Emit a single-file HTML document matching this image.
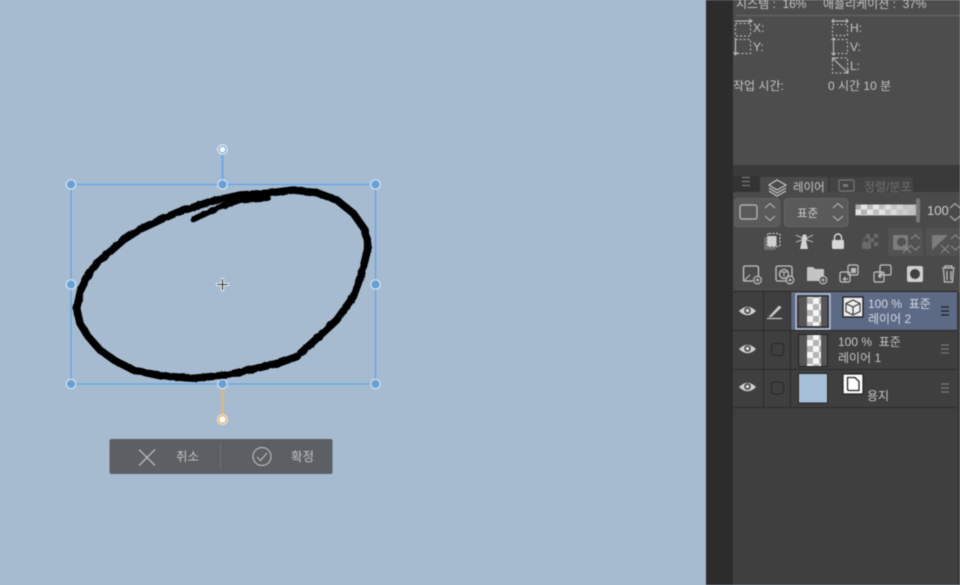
<!DOCTYPE html>
<html><head><meta charset="utf-8"><style>
html,body{margin:0;padding:0;background:#a6bbd0;width:960px;height:585px;overflow:hidden}
svg{display:block;filter:blur(.45px)}
text{font-family:"Liberation Sans","Noto Sans CJK KR",sans-serif;fill:#c4c4c4;font-size:12px;white-space:pre}
</style></head><body>
<svg width="960" height="585" viewBox="0 0 960 585" xmlns="http://www.w3.org/2000/svg">
<defs>
<pattern id="ck" width="12" height="12" patternUnits="userSpaceOnUse" x="807" y="298"><rect width="12" height="12" fill="#f6f6f6"/><rect width="6" height="6" fill="#b4b4b4"/><rect x="6" y="6" width="6" height="6" fill="#b4b4b4"/></pattern>
<pattern id="ck2" width="12" height="11" patternUnits="userSpaceOnUse" x="855" y="204"><rect width="12" height="11" fill="#e4e4e4"/><rect width="6" height="5.500" fill="#a8a8a8"/><rect x="6" y="5.500" width="6" height="5.500" fill="#a8a8a8"/></pattern>
<linearGradient id="fd"><stop offset="0" stop-color="#fff" stop-opacity="0"/><stop offset="1" stop-color="#bbb"/></linearGradient>
<filter id="rough" x="-5%" y="-5%" width="110%" height="110%"><feTurbulence type="fractalNoise" baseFrequency=".16" numOctaves="2" seed="4"/><feDisplacementMap in="SourceGraphic" scale="1.800"/></filter>
<symbol id="eye" viewBox="0 0 20 12" overflow="visible"><path d="M1 6Q10-3 19 6Q10 15 1 6Z" fill="#d0d0d0"/><circle cx="10" cy="5.500" r="3.500" fill="#444"/><circle cx="10" cy="5.500" r="1.800" fill="#ddd"/></symbol>
</defs>

<rect width="960" height="585" fill="#a6bbd0"/>

<!-- stroke -->
<g fill="none" stroke="#050505" stroke-linecap="round" stroke-linejoin="round" filter="url(#rough)">
<path stroke-width="7.500" d="M176.700,212.700L160,220L140,229.300L123.300,240L110,251.700L96.700,263.300L88.300,275L80.700,290L76.700,308.300L80,323.300L88.300,336.700L100,350L115,360.700L133.300,370L160,375.700L193.300,378.300L226.700,375L256.700,368.300L280,362.700L296.700,356.700L313.300,341.700L336.700,320L353.300,296.700L361.700,273.300L368.300,246.700L365,230L353.300,213.300L336.700,200L316.700,192.700L293.300,190L266.700,193.300L240,195L210,201.700Z"/>
<path stroke-width="6" d="M193.300,219.300L216.700,208.300L240,200L268,198"/>
</g>

<!-- transform box -->
<g fill="none">
<rect x="71" y="184.500" width="304.500" height="199.500" stroke="#5ba3ee" stroke-width="1.200"/>
<path d="M222.500 149.500V184.500" stroke="#5ba3ee" stroke-width="1.500"/>
<path d="M222.500 384V419.500" stroke="#e8b66e" stroke-width="2"/>
</g>
<g fill="#66a0d6" stroke="#d8e4ef" stroke-width="1.200">
<circle cx="71" cy="184.500" r="4.700"/><circle cx="222.500" cy="184.500" r="4.700"/><circle cx="375.500" cy="184.500" r="4.700"/>
<circle cx="71" cy="284.500" r="4.700"/><circle cx="375.500" cy="284.500" r="4.700"/>
<circle cx="71" cy="384" r="4.700"/><circle cx="222.500" cy="384" r="4.700"/><circle cx="375.500" cy="384" r="4.700"/>
</g>
<circle cx="222.500" cy="149.500" r="4.700" fill="#8fb5dc" stroke="#dfe8f0" stroke-width="1.200"/>
<circle cx="222.500" cy="149.500" r="2.600" fill="#fff"/>
<circle cx="222.500" cy="419.500" r="5" fill="none" stroke="#eee3d0" stroke-width="1"/>
<circle cx="222.500" cy="419.500" r="3.800" fill="#fff" stroke="#e8b66e" stroke-width="1.300"/>
<path d="M222.500 278v13M216 284.500h13" stroke="#f0f0f0" stroke-width="3"/>
<path d="M222.500 279v11M217 284.500h11" stroke="#333" stroke-width="1.100"/>

<!-- confirm bar -->
<rect x="109.500" y="439" width="223" height="35" rx="2" fill="#5c5f63"/>
<path d="M220.500 443V470" stroke="#6d7074" stroke-width="1"/>
<path d="M139 449.500L155 465.500M155 449.500L139 465.500" stroke="#b8b8b8" stroke-width="1.300" fill="none"/>
<circle cx="262" cy="456.500" r="9" fill="none" stroke="#b8b8b8" stroke-width="1.200"/>
<path d="M257 457L260.500 460.500L267 453" fill="none" stroke="#b8b8b8" stroke-width="1.200"/>
<text x="176" y="461" style="font-size:12.500px">취소</text>
<text x="291" y="461" style="font-size:12.500px">확정</text>

<!-- side panel -->
<rect x="706" y="0" width="27" height="585" fill="#2c2c2c"/>
<rect x="733" y="0" width="227" height="165" fill="#4d4d4d"/>
<rect x="733" y="165" width="227" height="27" fill="#3a3a3a"/>
<rect x="733" y="192" width="227" height="100" fill="#4a4a4a"/>
<rect x="733" y="292" width="227" height="293" fill="#3f3f3f"/>

<text x="736" y="8">시스템 :  16%</text>
<text x="823" y="8">애플리케이션 :  37%</text>
<path d="M736 15.500H960" stroke="#666" stroke-width="1.200"/>

<g fill="none" stroke="#c4c4c4" stroke-width="1">
<rect x="735.500" y="23.500" width="15" height="12.500" stroke-dasharray="2 2"/>
<path d="M735 21H751M749 19l3 2l-3 2" />
<rect x="735.500" y="39.500" width="15" height="14" stroke-dasharray="2 2"/>
<path d="M735.500 38V54M733.500 52l2 3l2-3"/>
<rect x="832.500" y="24.500" width="15" height="11" stroke-dasharray="2 2"/>
<path d="M832 21H848M834 19l-2 2l2 2M846 19l2 2l-2 2"/>
<rect x="833.500" y="39.500" width="14" height="14" stroke-dasharray="2 2"/>
<path d="M833.500 38V55M831.500 40l2-2l2 2M831.500 53l2 2l2-2"/>
<rect x="832.500" y="58" width="15" height="15" stroke-dasharray="2 2"/>
<path d="M832.500 58L848 73M832.500 62V58H836.500M844 73H848V69"/>
</g>
<text x="753" y="32">X:</text><text x="753" y="51">Y:</text>
<text x="850" y="32">H:</text><text x="850" y="51">V:</text><text x="850" y="70">L:</text>
<text x="733" y="90">작업 시간:</text>
<text x="828" y="90">0 시간 10 분</text>

<!-- tabs -->
<rect x="733" y="176" width="27" height="16" fill="#333"/>
<path d="M742 177.500h8M742 181.500h8M742 185.500h8" stroke="#777" stroke-width="1.200"/>
<path d="M760 192V179Q760 177 762 177H826Q828 177 828 179V192Z" fill="#4a4a4a"/>
<path d="M830 192V179Q830 177 832 177H911Q913 177 913 179V192Z" fill="#444"/>
<g fill="none" stroke="#c4c4c4" stroke-width="1.200">
<path d="M777 180L786 185L777 190L769 185Z"/>
<path d="M769 188L777 193L786 188M769 191L777 196L786 191"/>
</g>
<text x="793" y="191" style="font-size:11.500px">레이어</text>
<rect x="839" y="180" width="15" height="11" rx="1.500" fill="none" stroke="#777" stroke-width="1.200"/>
<rect x="843" y="184" width="5" height="3" fill="#777"/>
<text x="864" y="191" style="fill:#6f6f6f;font-size:12px">정렬/분포</text>

<!-- blend row -->
<rect x="734.500" y="198.500" width="45" height="28" rx="3" fill="#5a5a5a" stroke="#646464"/>
<rect x="740" y="205" width="17" height="14" rx="2" fill="none" stroke="#bdbdbd" stroke-width="1.200"/>
<path d="M765 208l5-4.500l5 4.500M765 216l5 4.500l5-4.500" fill="none" stroke="#b5b5b5" stroke-width="1.100"/>
<rect x="784.500" y="198.500" width="63.500" height="28" rx="3" fill="#5a5a5a" stroke="#646464"/>
<text x="797" y="217" style="font-size:11.500px;fill:#cfcfcf">표준</text>
<path d="M833 208l5-4.500l5 4.500M833 216l5 4.500l5-4.500" fill="none" stroke="#b5b5b5" stroke-width="1.100"/>
<rect x="855.500" y="204.500" width="61" height="11" fill="url(#ck2)"/>
<rect x="855.500" y="204.500" width="61" height="11" fill="url(#fd)"/>
<rect x="916" y="198.500" width="4" height="24" rx="1" fill="#777"/>
<text x="927" y="215" style="font-size:13px;fill:#cfcfcf">100</text>
<path d="M950 208l5-4.500l5 4.500M950 216l5 4.500l5-4.500" fill="none" stroke="#b5b5b5" stroke-width="1.100"/>

<!-- row 2 -->
<rect x="764" y="237" width="12" height="13" rx="2" fill="#707070"/>
<rect x="767.500" y="236" width="9" height="10" rx="1" fill="#cfcfcf"/>
<rect x="767.500" y="233.500" width="12.500" height="13" rx="1.500" fill="none" stroke="#ddd" stroke-dasharray="2 1.500" stroke-width="1"/>
<path d="M803 235h3l1 5h-5zM796 235l6 3M813 235l-6 3M796 242l6-2M813 242l-6-2" fill="#d4d4d4" stroke="#d4d4d4" stroke-width=".8"/>
<path d="M802 240h4l2 9h-8z" fill="#d4d4d4"/>
<rect x="832" y="240" width="12" height="9" rx="1.500" fill="#d8d8d8"/>
<path d="M834.500 240v-2.500a3.500 3.500 0 0 1 7 0v2.500" fill="none" stroke="#d8d8d8" stroke-width="1.400"/>
<g fill="#6a6a6a">
<rect x="862" y="242" width="9" height="7" rx="1"/><path d="M864 242v-2a2.500 2.500 0 0 1 5 0v2" fill="none" stroke="#6a6a6a" stroke-width="1.200"/>
<rect x="866" y="234" width="4" height="4"/><rect x="874" y="234" width="4" height="4"/><rect x="870" y="238" width="4" height="4"/><rect x="874" y="242" width="4" height="4"/>
</g>
<rect x="888" y="228" width="35" height="28" rx="2" fill="#525252"/>
<rect x="893" y="235" width="15" height="15" rx="1" fill="#7c7c7c"/>
<circle cx="901.500" cy="242" r="4.500" fill="#525252"/>
<path d="M903 245l8 8M911 245l-8 8" stroke="#8a8a8a" stroke-width="1"/>
<path d="M911 239l4.500-4l4.500 4M911 246l4.500 4l4.500-4" fill="none" stroke="#8a8a8a" stroke-width="1.100"/>
<rect x="926" y="228" width="34" height="28" rx="2" fill="#525252"/>
<path d="M932 235H948L932 250Z" fill="#7c7c7c"/>
<path d="M941 245l8 8M949 245l-8 8" stroke="#8a8a8a" stroke-width="1"/>
<path d="M951 239l4.500-4l4.500 4M951 246l4.500 4l4.500-4" fill="none" stroke="#8a8a8a" stroke-width="1.100"/>

<!-- row 3 -->
<g fill="none" stroke="#c4c4c4" stroke-width="1.300">
<path d="M743.500 281V268Q743.500 266 745.500 266H756Q758.500 266 758.500 268V276"/><path d="M743.500 281H753"/><path d="M744.500 280L750 275" stroke-width="1"/>
<rect x="776" y="266" width="16" height="15" rx="2"/><circle cx="784" cy="274" r="4.500"/><path d="M781 272h6M784 272v5" stroke-width="1"/>
</g>
<g fill="#4a4a4a" stroke="#c4c4c4" stroke-width="1.100">
<circle cx="757.500" cy="280" r="3.800"/><circle cx="790" cy="280" r="3.800"/>
</g>
<path d="M807 268q0-1 1-1h5l2 2h8q1 0 1 1v11h-17z" fill="#c4c4c4"/>
<circle cx="823" cy="280" r="3.800" fill="#4a4a4a" stroke="#c4c4c4" stroke-width="1.100"/>
<path d="M755.500 280h4M757.500 278v4M788 280h4M790 278v4M821 280h4M823 278v4" stroke="#c4c4c4" stroke-width=".9"/>
<g fill="none" stroke="#c4c4c4" stroke-width="1.200">
<rect x="840" y="272" width="10" height="10" rx="1.500"/>
<rect x="848" y="265" width="10" height="10" rx="1.500"/>
<path d="M848 279h-4M845.500 277l-2 2l2 2"/>
<rect x="874" y="272" width="10" height="10" rx="1.500"/>
<rect x="880" y="265" width="11" height="10" rx="1.500"/>
<path d="M883 272l-4 5M879 274v3h3"/>
<path d="M942 268H955M945 268v-2h7v2M943.500 269l1 13h8l1-13M947 271v9M951 271v9"/>
</g>
<rect x="851" y="268" width="5" height="5" fill="#bbb"/>
<rect x="907" y="266" width="16" height="16" rx="2" fill="#d0d0d0"/>
<circle cx="915" cy="274" r="5" fill="#3f3f3f"/>

<!-- layer rows -->
<rect x="791" y="292" width="166" height="38" fill="#5d6a86"/>
<path d="M733 291.500H957M733 330.500H957M733 369.500H957M733 407.500H957" stroke="#2e2e2e" stroke-width="1.200"/>
<path d="M763.500 292V407M790.500 292V407" stroke="#2e2e2e" stroke-width="1.200"/>
<rect x="957" y="292" width="3" height="293" fill="#3a3a3a"/>

<use href="#eye" x="738" y="305" width="19" height="12"/>
<use href="#eye" x="738" y="343" width="19" height="12"/>
<use href="#eye" x="738" y="381" width="19" height="12"/>

<path d="M767 318.500H782" fill="none" stroke="#c8c8c8" stroke-width="1.200"/>
<path d="M768.500 317L779 305.500L781.500 307.500L771.500 317Z" fill="#c8c8c8"/>
<rect x="771.500" y="343.500" width="12" height="12" rx="2.500" fill="none" stroke="#2c2c2c" stroke-width="1.200"/>
<rect x="771.500" y="382" width="12" height="12" rx="2.500" fill="none" stroke="#2c2c2c" stroke-width="1.200"/>

<!-- thumb 1 -->
<rect x="796" y="294" width="34" height="35" fill="none" stroke="#c9d2e0" stroke-width="1.200"/>
<rect x="798" y="296" width="30" height="31" fill="#555" stroke="#222" stroke-width="1"/>
<rect x="807" y="297" width="14" height="29" fill="url(#ck)"/>
<!-- thumb 2 -->
<rect x="798.500" y="334.500" width="29" height="32" fill="#555" stroke="#222" stroke-width="1"/>
<rect x="807" y="335" width="14" height="31" fill="url(#ck)"/>
<!-- paper thumb -->
<rect x="798.500" y="373.500" width="29" height="29.500" fill="#a6c0da" stroke="#222" stroke-width="1"/>

<!-- 3d icon -->
<rect x="843" y="297" width="20" height="20" fill="#eee" stroke="#222" stroke-width="1.400"/>
<path d="M853 300l7 3.500v8L853 315l-7-3.500v-8zM846 303.500L853 307L860 303.500M853 307V315" fill="none" stroke="#333" stroke-width="1.100"/>
<!-- paper icon -->
<rect x="843" y="374" width="20" height="20" rx="1" fill="#fff" stroke="#222" stroke-width="1.200"/>
<path d="M847.500 377.500H855L859 381.500V390.500H849Q847.500 390.500 847.500 389Z" fill="#fff" stroke="#222" stroke-width="1.300"/>

<text x="868" y="308" style="font-size:12px;fill:#d4d8e2">100 %  표준</text>
<text x="868" y="323" style="font-size:12px;fill:#d4d8e2">레이어 2</text>
<text x="838" y="346" style="font-size:12px">100 %  표준</text>
<text x="838" y="362" style="font-size:12px">레이어 1</text>
<text x="867" y="400" style="font-size:12px">용지</text>

<path d="M941 307h8M941 311h8M941 315h8" stroke="#222" stroke-width="1.300"/>
<path d="M941 345h8M941 349h8M941 353h8" stroke="#777" stroke-width="1.300"/>
<path d="M941 384h8M941 388h8M941 392h8" stroke="#777" stroke-width="1.300"/>
</svg>
</body></html>
